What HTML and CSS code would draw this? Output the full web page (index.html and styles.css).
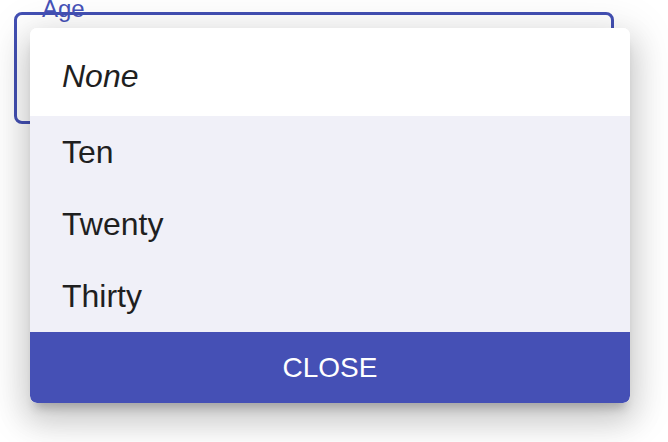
FILE: index.html
```html
<!DOCTYPE html>
<html lang="en">
<head>
<meta charset="utf-8">
<title>Age select</title>
<link rel="stylesheet" href="styles.css">
</head>
<body>
<div class="stage">
  <div class="field">
    <span class="field-label">Age</span>
    <div class="outline"></div>
  </div>
  <div class="menu">
    <ul class="menu-list">
      <li class="menu-item menu-item-none"><em>None</em></li>
      <li class="menu-item menu-item-alt">Ten</li>
      <li class="menu-item menu-item-alt">Twenty</li>
      <li class="menu-item menu-item-alt">Thirty</li>
    </ul>
    <button class="close-btn" type="button">Close</button>
  </div>
</div>
</body>
</html>
```
FILE: styles.css
```css
* { box-sizing: border-box; }
html, body {
  margin: 0;
  padding: 0;
  background: #ffffff;
  font-family: "Liberation Sans", Arial, sans-serif;
}
.stage {
  position: relative;
  width: 668px;
  height: 442px;
  padding: 12px 0 0 14px;
}
.field {
  position: relative;
  width: 600px;
}
.outline {
  width: 600px;
  height: 112px;
  border: 3px solid #4350b4;
  border-radius: 8px;
}
.field-label {
  position: absolute;
  left: 28px;
  top: -15px;
  font-size: 24px;
  line-height: 24px;
  color: #4652b8;
}
.menu {
  position: absolute;
  left: 30px;
  top: 28px;
  width: 600px;
  background: #ffffff;
  border-radius: 7px;
  overflow: hidden;
  box-shadow: 0 10px 10px -5px rgba(0,0,0,0.2),
              0 16px 30px 4px rgba(0,0,0,0.14),
              0 8px 44px 8px rgba(0,0,0,0.10);
}
.menu-list {
  list-style: none;
  margin: 0;
  padding: 0;
}
.menu-item {
  height: 72px;
  padding: 12px 32px;
  font-size: 32px;
  line-height: 48px;
  color: #1f1f1f;
}
.menu-item-none {
  height: 88px;
  padding-top: 24px;
  padding-bottom: 16px;
  background: #ffffff;
}
.menu-item-none em { font-style: italic; }
.menu-item-alt {
  background: #f0f0f8;
}
.close-btn {
  display: block;
  width: 100%;
  height: 71px;
  border: 0;
  margin: 0;
  padding: 0;
  background: #4550b5;
  color: #ffffff;
  font-family: "Liberation Sans", Arial, sans-serif;
  font-size: 28px;
  text-transform: uppercase;
  letter-spacing: 0;
  border-radius: 0 0 7px 7px;
}
```
